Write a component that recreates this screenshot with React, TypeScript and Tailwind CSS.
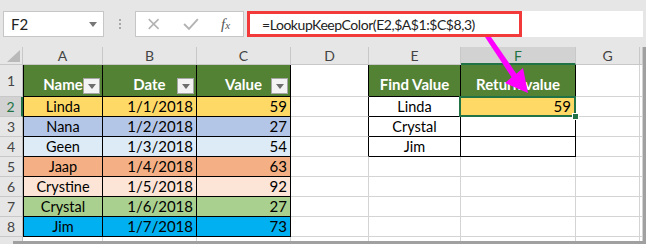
import React from 'react';

type Row = { name: string; date: string; value: string; bg: string };

const rows: Row[] = [
  { name: 'Linda', date: '1/1/2018', value: '59', bg: 'bg-[#ffd966]' },
  { name: 'Nana', date: '1/2/2018', value: '27', bg: 'bg-[#b4c6e7]' },
  { name: 'Geen', date: '1/3/2018', value: '54', bg: 'bg-[#ddebf7]' },
  { name: 'Jaap', date: '1/4/2018', value: '63', bg: 'bg-[#f4b084]' },
  { name: 'Crystine', date: '1/5/2018', value: '92', bg: 'bg-[#fce4d6]' },
  { name: 'Crystal', date: '1/6/2018', value: '27', bg: 'bg-[#a9d08e]' },
  { name: 'Jim', date: '1/7/2018', value: '73', bg: 'bg-[#00b0f0]' },
];

const findNames = ['Linda', 'Crystal', 'Jim'];

const FilterButton = () => (
  <div className="absolute right-[2px] bottom-[2px] w-[17px] h-[16px] bg-[#f3f3f3] border border-[#a6a6a6] flex items-center justify-center">
    <div className="w-0 h-0 border-l-[4px] border-r-[4px] border-t-[5px] border-l-transparent border-r-transparent border-t-[#6d6d6d]" />
  </div>
);

const RowHead: React.FC<{ n?: number; selected?: boolean }> = ({ n, selected }) => (
  <div
    className={`flex items-center justify-center text-[14px] border-b border-[#c8c8c8] ${
      selected ? 'bg-[#d2d2d2] border-r-2 border-r-[#217346] text-[#217346]' : 'bg-[#e6e6e6] border-r border-r-[#bdbdbd] text-[#444]'
    }`}
  >
    {n}
  </div>
);

const Blank: React.FC<{ dark?: boolean }> = ({ dark }) => (
  <div className={`bg-white border-b border-[#d4d4d4] border-r ${dark ? 'border-r-black' : 'border-r-[#d4d4d4]'}`} />
);

export default function App() {
  const colHeads = ['A', 'B', 'C', 'D', 'E', 'F', 'G', ''];

  return (
    <div className="w-[646px] h-[244px] overflow-hidden bg-[#e6e6e6] font-['Lato',sans-serif] text-black select-none">
      {/* formula bar */}
      <div className="h-[47px] flex items-start pt-[11px] pl-[3px] pr-[3px]">
        <div className="w-[101px] h-[26px] bg-white border border-[#c6c6c6] flex items-center justify-between pl-[7px] pr-[6px] text-[15px] text-[#222]">
          <span>F2</span>
          <div className="w-0 h-0 border-l-[4px] border-r-[4px] border-t-[5px] border-l-transparent border-r-transparent border-t-[#777]" />
        </div>
        <div className="w-[31px] h-[26px] flex flex-col items-center justify-center gap-[2px]">
          <div className="w-[2px] h-[2px] bg-[#a8a8a8]" />
          <div className="w-[2px] h-[2px] bg-[#a8a8a8]" />
          <div className="w-[2px] h-[2px] bg-[#a8a8a8]" />
        </div>
        <div className="w-[109px] h-[26px] bg-white border border-[#c6c6c6] flex items-center">
          <svg width="109" height="24" viewBox="0 0 109 24">
            <path d="M13 7 L23 17 M23 7 L13 17" stroke="#b4b4b4" strokeWidth="1.6" fill="none" />
            <path d="M49 12 L54 17 L63 7" stroke="#b4b4b4" strokeWidth="2" fill="none" />
          </svg>
          <span className="absolute ml-[85px] font-['Liberation_Serif',serif] italic text-[15px] text-[#555]">
            f<span className="text-[11px]">x</span>
          </span>
        </div>
        <div className="ml-[3px] flex-1 h-[26px] bg-white flex items-center">
          <div className="h-[26px] w-[275px] border-[3px] border-[#f23a3a] flex items-center pl-[12px] text-[14px] tracking-[-0.45px] text-[#222] whitespace-nowrap">
            =LookupKeepColor(E2,$A$1:$C$8,3)
          </div>
        </div>
      </div>

      <div className="flex h-[194px]">
        {/* sheet grid */}
        <div className="relative flex-1 grid grid-cols-[23px_80px_94px_94px_78px_92px_115px_64px_1fr] grid-rows-[18px_32px_repeat(7,20px)_4px] bg-white">
          {/* column headers */}
          <div className="bg-[#e6e6e6] border-r border-b border-[#c8c8c8] relative">
            <div
              className="absolute right-[2px] bottom-[2px] w-0 h-0"
              style={{ borderBottom: '12px solid #b9b9b9', borderLeft: '13px solid transparent' }}
            />
          </div>
          {colHeads.map((c) =>
            c === 'F' ? (
              <div key={c} className="bg-[#d2d2d2] border-r border-r-[#c8c8c8] border-b-2 border-b-[#217346] text-[#217346] text-[14px] flex items-center justify-center">
                {c}
              </div>
            ) : (
              <div key={c || 'h'} className="bg-[#e6e6e6] border-r border-b border-[#c8c8c8] text-[#444] text-[14px] flex items-center justify-center">
                {c}
              </div>
            )
          )}

          {/* row 1 */}
          <RowHead n={1} />
          {['Name', 'Date', 'Value'].map((h, i) => (
            <div
              key={h}
              className={`relative bg-[#548235] border-r border-b border-black ${i === 0 ? 'border-l' : ''} flex items-end justify-center pb-[3px] text-[15px] font-bold text-white leading-[18px]`}
            >
              {h}
              <FilterButton />
            </div>
          ))}
          <Blank dark />
          <div className="bg-[#548235] border-r border-b border-black flex items-end justify-center pb-[3px] text-[15px] font-bold text-white leading-[18px]">
            Find Value
          </div>
          <div className="bg-[#548235] border-r border-b border-black flex items-end justify-center pb-[3px] text-[15px] font-bold text-white leading-[18px]">
            Return value
          </div>
          <Blank />
          <Blank />

          {/* rows 2-8 */}
          {rows.map((r, i) => (
            <React.Fragment key={r.name}>
              <RowHead n={i + 2} selected={i === 0} />
              <div className={`${r.bg} border-l border-r border-b border-black flex items-center justify-center text-[14.5px]`}>{r.name}</div>
              <div className={`${r.bg} border-r border-b border-black flex items-center justify-end pr-[3px] text-[15px]`}>{r.date}</div>
              <div className={`${r.bg} border-r border-b border-black flex items-center justify-end pr-[3px] text-[15px]`}>{r.value}</div>
              <Blank dark={i < 3} />
              {i < 3 ? (
                <div className="bg-white border-r border-b border-black flex items-center justify-center text-[14.5px]">{findNames[i]}</div>
              ) : (
                <Blank />
              )}
              {i === 0 ? (
                <div className="relative bg-[#ffd966] border-r border-b border-black flex items-center justify-end pr-[4px] text-[15px]">
                  59
                  <div className="absolute z-10 -left-[2px] -top-px -right-px -bottom-px border-2 border-[#217346]" />
                  <div className="absolute z-20 -right-[4px] -bottom-[4px] w-[7px] h-[7px] bg-[#217346] border border-white" />
                </div>
              ) : i < 3 ? (
                <div className="bg-white border-r border-b border-black" />
              ) : (
                <Blank />
              )}
              <Blank />
              <Blank />
            </React.Fragment>
          ))}

          {/* partial row 9 */}
          <div className="bg-[#e6e6e6] border-r border-[#bdbdbd]" />
          {[0, 1, 2, 3, 4, 5, 6, 7].map((k) => (
            <div key={k} className="bg-white border-r border-[#d4d4d4]" />
          ))}

          {/* arrow pointing from formula to result cell */}
          <svg className="absolute left-0 -top-[10px] z-30 pointer-events-none" width="643" height="120" viewBox="0 37 643 120">
            <polygon points="485,37 491,37 516.4,73.7 523,68 528,93 505,83 511.6,77.3" fill="#ff00ff" />
          </svg>
        </div>
        <div className="w-[3px] bg-[#a0a0a0]" />
      </div>
      <div className="flex h-[3px]">
        <div className="w-[13px] bg-[#e6e6e6]" />
        <div className="flex-1 bg-[#a0a0a0]" />
      </div>
    </div>
  );
}
